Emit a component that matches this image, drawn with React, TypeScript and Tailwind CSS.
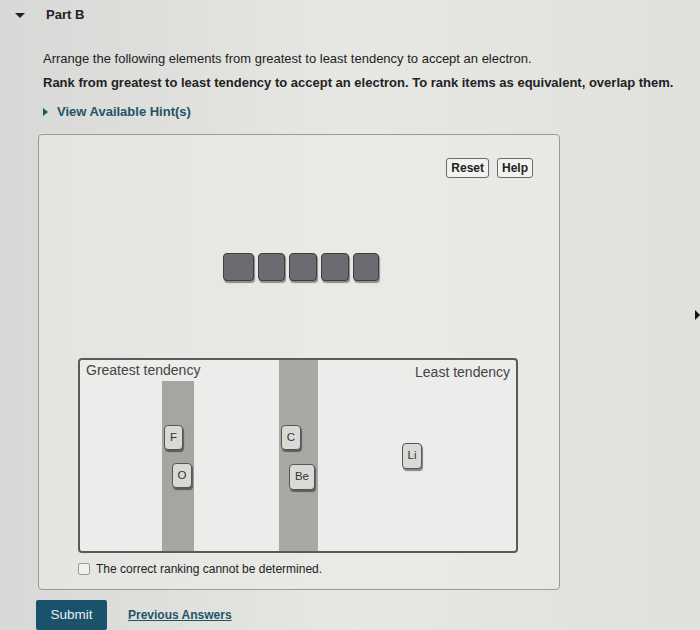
import React from "react";

const font = { fontFamily: '"Liberation Sans", Arial, sans-serif' };

function Tile({ label, className }: { label: string; className: string }) {
  return (
    <div
      className={`absolute flex items-center justify-center rounded-[4px] border border-[#55565a] bg-[#d9d9d6] text-[11.5px] text-[#333] shadow-[1px_2px_1px_rgba(0,0,0,0.45)] ${className}`}
    >
      {label}
    </div>
  );
}

export default function App() {
  const slots = ["w-[31px]", "w-[27px]", "w-[28px]", "w-[28px]", "w-[26px]"];

  return (
    <div
      style={font}
      className="relative w-[700px] h-[630px] overflow-hidden bg-gradient-to-r from-[#d8d8d6] via-[#e7e7e4] to-[#e0e0dd] text-[#222]"
    >
      {/* header */}
      <div className="flex items-center h-[28px] pt-[2px]">
        <div className="ml-[15px] w-0 h-0 border-l-[5px] border-r-[5px] border-t-[5px] border-l-transparent border-r-transparent border-t-[#222]" />
        <div className="ml-[21px] text-[13px] font-bold">Part B</div>
      </div>

      <div className="pl-[43px] pt-[23px]">
        <p className="text-[13px] leading-[15px]">
          Arrange the following elements from greatest to least tendency to accept an electron.
        </p>
        <p className="mt-[9px] text-[13px] leading-[15px] font-bold">
          Rank from greatest to least tendency to accept an electron. To rank items as equivalent, overlap them.
        </p>
        <div className="mt-[14px] flex items-center gap-[9px] text-[#1f5468] text-[13px] leading-[15px] font-bold">
          <div className="w-0 h-0 border-t-[4px] border-b-[4px] border-l-[5px] border-t-transparent border-b-transparent border-l-[#1f5468]" />
          View Available Hint(s)
        </div>
      </div>

      {/* outer question box */}
      <div className="ml-[38px] mt-[15px] w-[522px] h-[456px] rounded-[4px] border border-[#9a9a98] bg-[#ebebe8]/60 flex flex-col">
        <div className="flex justify-end gap-[8px] pt-[23px] pr-[26px]">
          <button className="h-[20px] px-[4px] rounded-[3px] border border-[#6a6a6a] bg-[#f2f2f0] text-[12px] font-bold text-[#222]">
            Reset
          </button>
          <button className="h-[20px] px-[4px] rounded-[3px] border border-[#6a6a6a] bg-[#f2f2f0] text-[12px] font-bold text-[#222]">
            Help
          </button>
        </div>

        <div className="flex gap-[4px] ml-[184px] mt-[75px]">
          {slots.map((w, i) => (
            <div
              key={i}
              className={`${w} h-[28px] rounded-[4px] border border-[#3d3d42] bg-[#6c6b72] shadow-[1px_2px_1px_rgba(0,0,0,0.4)]`}
            />
          ))}
        </div>

        {/* ranking area */}
        <div className="relative ml-[39px] mt-[77px] w-[440px] h-[195px] rounded-[4px] border-2 border-[#5a5a5c] bg-[#ececea]">
          <div className="absolute left-[82px] top-[21px] bottom-0 w-[32px] bg-[#a5a5a2]" />
          <div className="absolute left-[199px] top-0 bottom-0 w-[39px] bg-[#a8a8a5]" />
          <div className="absolute left-[6px] top-[0px] text-[14px] text-[#444]">Greatest tendency</div>
          <div className="absolute right-[6px] top-[2px] text-[14px] text-[#444]">Least tendency</div>
          <Tile label="F" className="left-[84px] top-[65px] w-[19px] h-[25px]" />
          <Tile label="O" className="left-[92px] top-[103px] w-[20px] h-[25px]" />
          <Tile label="C" className="left-[201px] top-[65px] w-[20px] h-[25px]" />
          <Tile label="Be" className="left-[209px] top-[104px] w-[26px] h-[26px]" />
          <Tile label="Li" className="left-[322px] top-[83px] w-[20px] h-[26px]" />
        </div>

        <div className="flex items-center ml-[39px] mt-[7px] gap-[6px]">
          <div className="w-[12px] h-[12px] rounded-[2px] border border-[#9a9a9a] bg-[#f0f0ee]" />
          <span className="text-[12px] text-[#222]">The correct ranking cannot be determined.</span>
        </div>
      </div>

      {/* footer */}
      <div className="flex items-center mt-[10px] ml-[36px]">
        <button className="w-[71px] h-[30px] rounded-[2px] bg-[#1b526b] text-[13.5px] text-[#e8eef0]">Submit</button>
        <span className="ml-[21px] text-[12px] font-bold underline text-[#1f5468]">Previous Answers</span>
      </div>

      <div className="absolute right-0 top-[310px] w-0 h-0 border-t-[5px] border-b-[5px] border-l-[5px] border-t-transparent border-b-transparent border-l-[#111]" />
    </div>
  );
}
